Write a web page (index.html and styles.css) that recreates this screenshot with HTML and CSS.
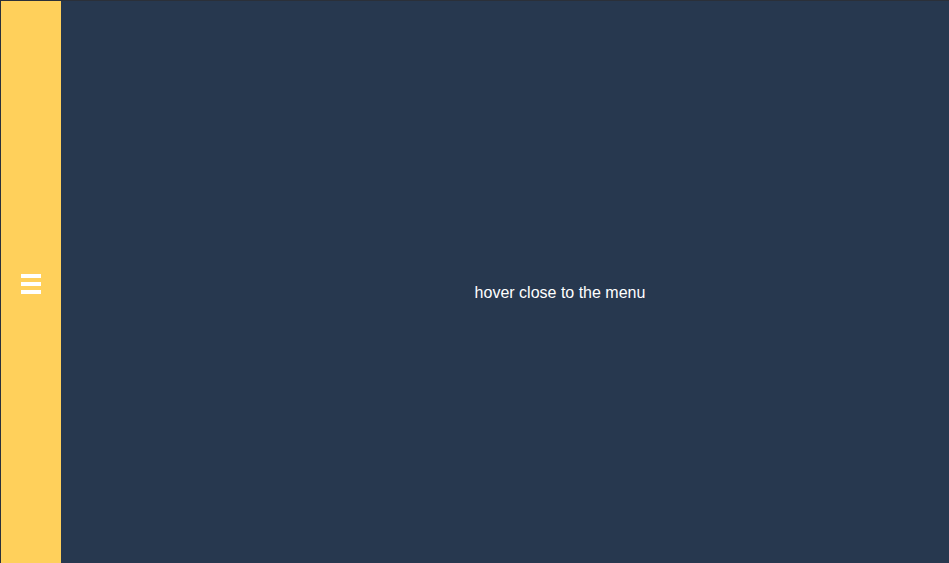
FILE: index.html
```html
<!DOCTYPE html>
<html>
<head>
<meta charset="utf-8">
<link rel="stylesheet" href="styles.css">
</head>
<body>
<div class="frame">
  <nav class="sidebar">
    <div class="burger"><span></span><span></span><span></span></div>
  </nav>
  <main class="main">
    <p class="hint">hover close to the menu</p>
  </main>
</div>
</body>
</html>
```
FILE: styles.css
```css
html, body { margin: 0; padding: 0; }
body { background: #27384f; font-family: "Liberation Sans", Arial, sans-serif; }
.frame {
  height: 563px;
  box-sizing: border-box;
  border-top: 1px solid #2b3039;
  border-left: 1px solid #2b3039;
  display: flex;
}
.sidebar {
  width: 60px;
  background: #ffd05b;
  display: flex;
  align-items: center;
  justify-content: center;
  padding-top: 4px;
  box-sizing: border-box;
}
.burger { display: flex; flex-direction: column; gap: 4px; width: 20px; }
.burger span { display: block; height: 4px; background: #ffffff; }
.main {
  flex: 1;
  background: #27384f;
  display: flex;
  align-items: center;
  justify-content: center;
  padding-left: 110px;
  padding-top: 22px;
  box-sizing: border-box;
}
.hint { margin: 0; color: #ffffff; font-size: 16px; line-height: 20px; }
```
